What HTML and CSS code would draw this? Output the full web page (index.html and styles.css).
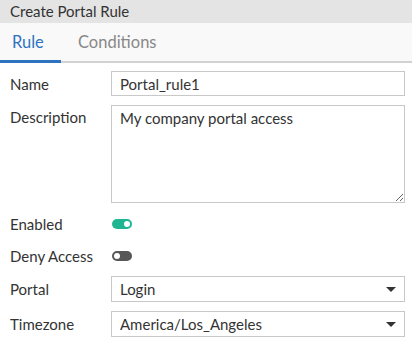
FILE: index.html
```html
<!DOCTYPE html>
<html lang="en">
<head>
    <meta charset="UTF-8">
    <title>Create Portal Rule</title>
    <link rel="stylesheet" href="styles.css">
</head>
<body>
    <header class="title">Create Portal Rule</header>
    <nav class="tabs">
        <button class="tab active">Rule</button>
        <button class="tab">Conditions</button>
    </nav>

    <form class="form">
        <label class="label" for="name">Name</label>
        <input class="field" type="text" id="name" value="Portal_rule1">

        <label class="label top" for="desc">Description</label>
        <textarea class="field area" id="desc">My company portal access</textarea>

        <span class="label">Enabled</span>
        <span class="toggle on"></span>

        <span class="label">Deny Access</span>
        <span class="toggle"></span>

        <label class="label" for="portal">Portal</label>
        <div class="select">
            <select class="field" id="portal">
                <option>Login</option>
            </select>
        </div>

        <label class="label" for="tz">Timezone</label>
        <div class="select">
            <select class="field" id="tz">
                <option>America/Los_Angeles</option>
            </select>
        </div>
    </form>
</body>
</html>
```

FILE: styles.css
```css
body {
    margin: 0;
    font-family: Lato, "Open Sans", sans-serif;
    color: #333;
    background-color: #fff;
}

.title {
    height: 23px;
    line-height: 22px;
    padding-left: 10px;
    font-size: 15px;
    background-color: #e4e4e4;
}

.tabs {
    display: flex;
    height: 38px;
    background-color: #f9f9f9;
    border-bottom: 2px solid #d2d2d2;
}

.tab {
    margin: 0 0 -2px 0;
    padding: 0 11px 0 12px;
    font-family: inherit;
    font-size: 16.5px;
    color: #888;
    background: none;
    border: none;
    border-bottom: 3px solid transparent;
    line-height: 36px;
}

.tab.active {
    width: 61px;
    padding-left: 12px;
    text-align: left;
    color: #2e73bf;
    border-bottom-color: #2e73bf;
    margin-right: 5px;
}

/* Form */
.form {
    display: grid;
    grid-template-columns: 101px 294px;
    grid-template-rows: 25px 98px 23px 23px 26px 26px;
    row-gap: 9px;
    padding: 8px 0 0 10px;
    align-items: center;
}

.label {
    font-size: 15px;
}

.label.top {
    align-self: start;
    line-height: 25px;
}

.field {
    box-sizing: border-box;
    width: 294px;
    height: 25px;
    margin: 0;
    padding: 0 8px;
    font-family: inherit;
    font-size: 15px;
    color: #333;
    background-color: #fff;
    border: 1px solid #c8c8c8;
    border-radius: 0;
    outline: none;
}

.area {
    height: 98px;
    padding-top: 3px;
    line-height: 18px;
    resize: both;
}

.toggle {
    position: relative;
    display: block;
    width: 20px;
    height: 10px;
    margin-left: 1px;
    border-radius: 5px;
    background-color: #575757;
}

.toggle::after {
    content: "";
    position: absolute;
    top: 2px;
    left: 2px;
    width: 6px;
    height: 6px;
    border-radius: 50%;
    background-color: #fff;
}

.toggle.on {
    background-color: #1eb592;
}

.toggle.on::after {
    left: 12px;
}

.select {
    position: relative;
}

.select select {
    height: 26px;
    appearance: none;
    -webkit-appearance: none;
}

.select::after {
    content: "";
    position: absolute;
    right: 9px;
    top: 11px;
    border-left: 5px solid transparent;
    border-right: 5px solid transparent;
    border-top: 5px solid #333;
    pointer-events: none;
}
```
